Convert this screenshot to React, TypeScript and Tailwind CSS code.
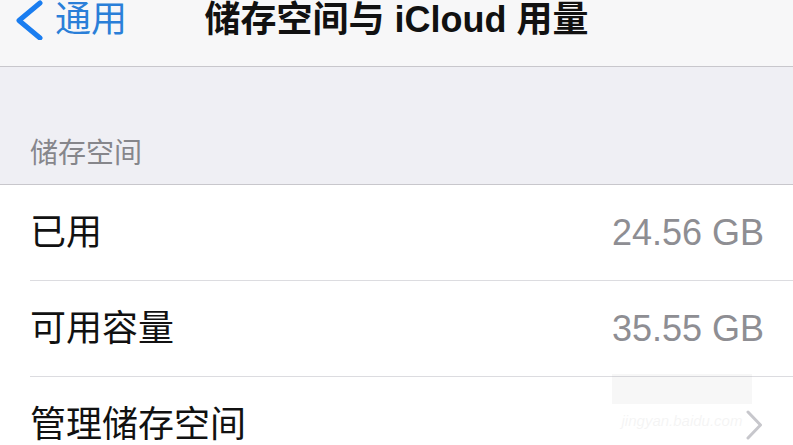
import React from "react";

const font = { fontFamily: '"Liberation Sans", "Noto Sans CJK SC", sans-serif' };

function Row({ label, value, chevron, divider }: { label: string; value?: string; chevron?: boolean; divider?: boolean }) {
  return (
    <div className="relative h-[96px] bg-white flex items-center pl-[30px] pr-[29px]">
      <span className="text-[36px] leading-[40px] text-[#111]">{label}</span>
      <div className="flex-1" />
      {value && <span className="text-[36px] leading-[40px] text-[#8e8e93]">{value}</span>}
      {chevron && (
        <svg width="17" height="30" viewBox="0 0 17 30" className="mr-[1px]">
          <path d="M2 2 L14.5 15 L2 28" fill="none" stroke="#c7c7cc" strokeWidth="3" strokeLinecap="round" strokeLinejoin="round" />
        </svg>
      )}
      {divider && <div className="absolute bottom-0 left-[30px] right-0 h-[1px] bg-[#dcdce0]" />}
    </div>
  );
}

export default function App() {
  return (
    <div className="w-[793px] h-[445px] overflow-hidden bg-[#efeff4] relative" style={font}>
      <div className="h-[67px] bg-[#f7f7f8] border-b border-[#c8c7cc] relative">
        <div className="h-[40px] flex items-center">
          <div className="flex items-center pl-[14px]">
            <svg width="30" height="40" viewBox="0 0 30 40">
              <path d="M26 3 L5 20.5 L26 38" fill="none" stroke="#1a7df0" strokeWidth="5" strokeLinecap="round" strokeLinejoin="round" />
            </svg>
            <span className="ml-[11px] text-[36px] leading-[40px] text-[#2a7fd8]">通用</span>
          </div>
        </div>
        <div className="absolute top-0 left-0 right-0 h-[40px] flex items-center justify-center">
          <span className="text-[36px] leading-[40px] font-semibold text-[#111]">储存空间与 iCloud 用量</span>
        </div>
      </div>
      <div className="h-[118px] flex items-end pb-[12px] pl-[30px] border-b border-[#c8c7cc]">
        <span className="text-[28px] leading-[36px] text-[#86868b]">储存空间</span>
      </div>
      <Row label="已用" value="24.56 GB" divider />
      <Row label="可用容量" value="35.55 GB" divider />
      <Row label="管理储存空间" chevron />
      <div className="absolute left-[612px] top-[362px] w-[140px] flex flex-col items-center opacity-[0.06] pointer-events-none">
        <div className="w-[140px] h-[30px] bg-[#888] mt-[12px]" />
        <span className="text-[15px] italic text-[#555] mt-[6px]">jingyan.baidu.com</span>
      </div>
    </div>
  );
}
